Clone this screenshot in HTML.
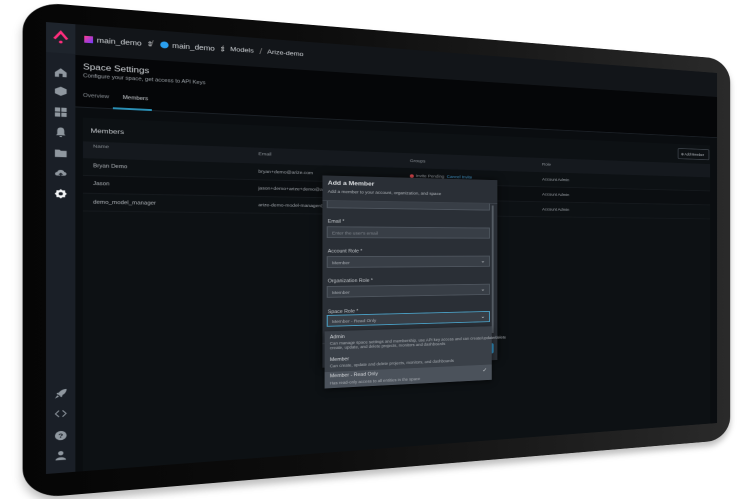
<!DOCTYPE html>
<html><head><meta charset="utf-8"><style>
*{margin:0;padding:0;box-sizing:border-box}
body{width:754px;height:498px;background:#fff;overflow:hidden;position:relative;font-family:"Liberation Sans",sans-serif}
.mon{position:absolute;left:46px;top:22px;width:671px;height:452px;transform-origin:0 0;transform:matrix3d(1.2914,0.0981,0,0.000434,0,1,0,0,0,0,1,0,0,0,0,1)}
.bez{position:absolute;left:-18px;top:-19px;width:706px;height:494px;border-radius:30px;background:linear-gradient(90deg,#050505 0%,#0d0d0d 35%,#2a2a2a 100%);box-shadow:0 6px 8px rgba(0,0,0,.25)}
.scr{position:absolute;left:0;top:0;width:671px;height:452px;background:#0a0d10;overflow:hidden}
.a{position:absolute;white-space:nowrap}
.side{position:absolute;left:0;top:0;width:23px;height:452px;background:#1a1f27}
.logo{position:absolute;left:0;top:0;width:23px;height:30px;background:#1e242c}
.ic{position:absolute;left:6px;width:11px;height:11px}
.top{position:absolute;left:23px;top:0;width:648px;height:31px;background:#121519}
.hdr{position:absolute;left:23px;top:31px;width:648px;height:53px;background:#050608;border-bottom:1px solid #1b2026}
.t{color:#c8ccd1;font-size:6px}
.card{position:absolute;left:29px;top:94px;width:633px;height:358px;background:#0d1114}
.row{position:absolute;left:0;width:633px;height:18px;border-bottom:1px solid #15191d}
.modal{position:absolute;left:236px;top:146px;width:176px;height:212px;background:#2a2f36;box-shadow:0 0 8px rgba(0,0,0,.6)}
.lab{position:absolute;left:5px;color:#c5c9cd;font-size:5px}
.inp{position:absolute;left:4px;width:164px;height:13px;background:#383e46;border:1px solid #4e555e;color:#a9aeb4;font-size:4.6px;padding:3.5px 4px}
.chev{position:absolute;right:4px;top:2px;color:#cfd3d7;font-size:6px}
.dd{position:absolute;left:238px;top:318px;width:168px;height:63px;background:#3a4048;box-shadow:0 2px 6px rgba(0,0,0,.5)}
.dd .a{font-size:5px;color:#d5d8dc}
.dd .d{font-size:4.2px;color:#a8adb3}
</style></head><body>
<div class="mon">
 <div class="bez"></div>
 <div class="scr">
  <div class="side">
   <div class="logo">
    <svg style="position:absolute;left:5px;top:7px" width="13" height="14" viewBox="0 0 13 14"><path d="M1.5 9 L6.5 2 L11.5 9" fill="none" stroke="#ff2d7d" stroke-width="2.2" stroke-linejoin="miter"/><circle cx="6.5" cy="12" r="1.4" fill="#ff2d7d"/></svg>
   </div>
   <svg class="ic" style="top:44px" viewBox="0 0 12 12"><path d="M1 6 L6 1.5 L11 6 V11 H7.5 V7.5 H4.5 V11 H1Z" fill="#8f979f"/></svg>
   <svg class="ic" style="top:63px" viewBox="0 0 12 12"><path d="M6 1 L11 3.5 V8.5 L6 11 L1 8.5 V3.5Z" fill="#8f979f"/></svg>
   <svg class="ic" style="top:84px" viewBox="0 0 12 12"><rect x="1" y="1" width="4.5" height="4.5" fill="#8f979f"/><rect x="6.5" y="1" width="4.5" height="4.5" fill="#8f979f"/><rect x="1" y="6.5" width="4.5" height="4.5" fill="#8f979f"/><rect x="6.5" y="6.5" width="4.5" height="4.5" fill="#8f979f"/></svg>
   <svg class="ic" style="top:104px" viewBox="0 0 12 12"><path d="M6 1 C3.5 1 3 3 3 5 V8 L2 9.5 H10 L9 8 V5 C9 3 8.5 1 6 1Z M5 10.3 H7 V11.5 H5Z" fill="#8f979f"/></svg>
   <svg class="ic" style="top:125px" viewBox="0 0 12 12"><path d="M1 2.5 H5 L6 3.5 H11 V10.5 H1Z" fill="#8f979f"/></svg>
   <svg class="ic" style="top:145px" viewBox="0 0 12 12"><path d="M3 9 C0.5 9 0.5 5 3 5 C3.5 2 8.5 2 9 5 C11.5 5 11.5 9 9 9Z" fill="#8f979f"/><path d="M6 11 V6.5 M4.5 8 L6 6.5 L7.5 8" stroke="#1a1f27" stroke-width="1" fill="none"/></svg>
   <svg class="ic" style="top:166px" viewBox="0 0 12 12"><path d="M6 0.8 L7.5 2.3 L9.6 2.2 L9.8 4.3 L11.2 6 L9.8 7.7 L9.6 9.8 L7.5 9.7 L6 11.2 L4.5 9.7 L2.4 9.8 L2.2 7.7 L0.8 6 L2.2 4.3 L2.4 2.2 L4.5 2.3Z" fill="#f2f4f6"/><circle cx="6" cy="6" r="1.8" fill="#1a1f27"/></svg>
   <svg class="ic" style="top:367px" viewBox="0 0 12 12"><path d="M11 1 C7 1 4.5 3.5 3.5 6.5 L5.5 8.5 C8.5 7.5 11 5 11 1Z M3 7.5 L1 11 L4.5 9Z M2.5 5 L4.5 4.5 L3 7Z M7 9.5 L7.5 7.5 L5 9Z" fill="#8f979f"/></svg>
   <svg class="ic" style="top:387px" viewBox="0 0 12 12"><path d="M4.5 2.5 L1.5 6 L4.5 9.5 M7.5 2.5 L10.5 6 L7.5 9.5" fill="none" stroke="#8f979f" stroke-width="1"/></svg>
   <svg class="ic" style="top:409px" viewBox="0 0 12 12"><circle cx="6" cy="6" r="5" fill="#8f979f"/><text x="6" y="8.6" font-size="7" font-weight="bold" text-anchor="middle" fill="#1a1f27" font-family="Liberation Sans">?</text></svg>
   <svg class="ic" style="top:429px" viewBox="0 0 12 12"><circle cx="6" cy="3.5" r="2.3" fill="#8f979f"/><path d="M1.5 11 C1.5 7 10.5 7 10.5 11Z" fill="#8f979f"/></svg>
  </div>
  <div class="top">
   <div class="a" style="left:7px;top:11px;width:7px;height:7px;background:linear-gradient(135deg,#ff3d8e,#6f3cff)"></div>
   <div class="a t" style="left:17px;top:11px;font-size:7px;color:#d2d6da">main_demo &nbsp;⇕</div>
   <div class="a t" style="left:61px;top:9px;font-size:9px;color:#777">/</div>
   <div class="a" style="left:69px;top:11px;width:7px;height:7px;border-radius:50%;background:#2aa0f0"></div>
   <div class="a t" style="left:79px;top:11px;font-size:7px;color:#d2d6da">main_demo &nbsp;⇕</div>
   <div class="a t" style="left:121px;top:9px;font-size:9px;color:#777">/</div>
   <div class="a t" style="left:129px;top:11px;font-size:6.5px;color:#d2d6da">Models</div>
   <div class="a t" style="left:155px;top:9px;font-size:9px;color:#777">/</div>
   <div class="a t" style="left:162px;top:11px;font-size:6.5px;color:#d2d6da">Arize-demo</div>
  </div>
  <div class="hdr">
   <div class="a" style="left:6px;top:7px;font-size:8px;color:#cfd3d7">Space Settings</div>
   <div class="a" style="left:6px;top:18px;font-size:5px;color:#9da3a9">Configure your space, get access to API Keys</div>
   <div class="a" style="left:6px;top:38px;font-size:5px;color:#8c9298">Overview</div>
   <div class="a" style="left:38px;top:38px;font-size:5px;color:#cfd3d7">Members</div>
   <div class="a" style="left:30px;top:51px;width:32px;height:2px;background:#2a8fb5"></div>
  </div>
  <div class="card">
   <div class="a" style="left:6px;top:10px;font-size:6.5px;color:#c4c8cc">Members</div>
   <div class="a" style="left:592px;top:5px;width:40px;height:14px;border:1px solid #3a4047;border-radius:2px;font-size:4.3px;color:#b5bac0;padding:4px 3px">⊕ Add Member</div>
   <div class="a" style="left:0;top:24px;width:633px;height:17px;background:#15191e"></div>
   <div class="a" style="left:8px;top:27px;font-size:4.8px;color:#8c9298">Name</div>
   <div class="a" style="left:148px;top:29px;font-size:4.8px;color:#8c9298">Email</div>
   <div class="a" style="left:292px;top:31px;font-size:4.8px;color:#8c9298">Groups</div>
   <div class="a" style="left:432px;top:30px;font-size:4.8px;color:#8c9298">Role</div>
   <div class="row" style="top:41px"></div><div class="row" style="top:59px;background:#0b0e11"></div><div class="row" style="top:77px"></div>
   <div class="a" style="left:8px;top:46px;font-size:5px;color:#b0b5ba">Bryan Demo</div>
   <div class="a" style="left:148px;top:47px;font-size:4.6px;color:#a0a5ab">bryan+demo@arize.com</div>
   <div class="a" style="left:432px;top:47px;font-size:4.6px;color:#a0a5ab">Account Admin</div>
   <div class="a" style="left:292px;top:48px;width:4px;height:4px;border-radius:50%;background:#e0484e"></div>
   <div class="a" style="left:298px;top:47px;font-size:4.6px;color:#a0a5ab">Invite Pending &nbsp;<span style="color:#4aa8e0">Cancel Invite</span></div>
   <div class="a" style="left:8px;top:64px;font-size:5px;color:#b0b5ba">Jason</div>
   <div class="a" style="left:148px;top:65px;font-size:4.6px;color:#a0a5ab">jason+demo+arize+demo@arize.com</div>
   <div class="a" style="left:432px;top:65px;font-size:4.6px;color:#a0a5ab">Account Admin</div>
   <div class="a" style="left:8px;top:83px;font-size:5px;color:#b0b5ba">demo_model_manager</div>
   <div class="a" style="left:148px;top:83px;font-size:4.6px;color:#a0a5ab">arize-demo-model-manager@arize.com</div>
   <div class="a" style="left:432px;top:83px;font-size:4.6px;color:#a0a5ab">Account Admin</div>
  </div>
  <div class="modal">
   <div class="a" style="left:5px;top:5px;font-size:6.5px;font-weight:bold;color:#dcdfe2">Add a Member</div>
   <div class="a" style="left:5px;top:15px;font-size:4.5px;color:#b0b5ba">Add a member to your account, organization, and space</div>
   <div class="a" style="left:0;top:27px;width:176px;height:1px;background:#3c424a"></div>
   <div class="inp" style="top:28px;height:8px;border-top:none"></div>
   <div class="a" style="left:170px;top:30px;width:2px;height:150px;background:#555c64"></div>
   <div class="lab" style="top:48px">Email *</div>
   <div class="inp" style="top:56px;color:#80868d">Enter the user's email</div>
   <div class="lab" style="top:81px">Account Role *</div>
   <div class="inp" style="top:89px">Member<span class="chev">⌄</span></div>
   <div class="lab" style="top:114px">Organization Role *</div>
   <div class="inp" style="top:122px">Member<span class="chev">⌄</span></div>
   <div class="lab" style="top:148px">Space Role *</div>
   <div class="inp" style="top:154px;border-color:#4a9fc4">Member - Read Only<span class="chev">⌄</span></div>
   <div class="a" style="left:0;top:185px;width:176px;height:1px;background:#3c424a"></div>
   <div class="a" style="left:158px;top:192px;width:14px;height:12px;background:#2f8fc0;border-radius:2px"></div>
  </div>
  <div class="dd">
   <div class="a" style="left:5px;top:4px">Admin</div>
   <div class="a d" style="left:5px;top:11px">Can manage space settings and membership, use API key access and can create/update/delete</div>
   <div class="a d" style="left:5px;top:16px">create, update, and delete projects, monitors and dashboards</div>
   <div class="a" style="left:5px;top:29px">Member</div>
   <div class="a d" style="left:5px;top:36px">Can create, update and delete projects, monitors, and dashboards</div>
   <div class="a" style="left:0;top:45px;width:168px;height:18px;background:#4b525b"></div>
   <div class="a" style="left:5px;top:47px">Member - Read Only</div>
   <div class="a d" style="left:5px;top:55px">Has read-only access to all entities in the space</div>
   <div class="a" style="left:158px;top:48px;color:#cfd3d7;font-size:6px">✓</div>
  </div>
 </div>
</div>
</body></html>
